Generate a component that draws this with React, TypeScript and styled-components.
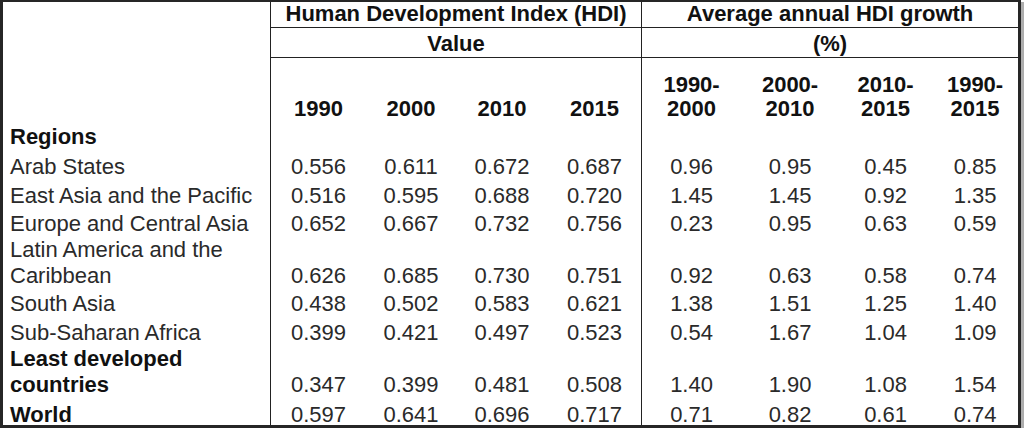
import React from 'react'
import styled, { createGlobalStyle } from 'styled-components'

const GlobalStyle = createGlobalStyle`
	body {
		margin: 0;
		background: #fff;
		font-family: "Liberation Sans", Arial, sans-serif;
	}
`

const Table = styled.table`
	box-sizing: border-box;
	width: 1021px;
	table-layout: fixed;
	border-collapse: separate;
	border-spacing: 0;
	border: 3px solid #262626;
	border-top-width: 2px;
	box-shadow: 3px 2px 0 #adadad;
	font-size: 22px;
	color: #2a2a2a;
`

const Row = styled.tr<{ $h: number }>`
	height: ${props => props.$h}px;
`

const Cell = styled.td<{ $divider?: boolean; $bold?: boolean; $tight?: boolean }>`
	box-sizing: border-box;
	padding: 0;
	vertical-align: bottom;
	text-align: center;
	line-height: ${props => props.$tight ? 20 : 26}px;
	white-space: nowrap;
	font-weight: ${props => props.$bold ? 'bold' : 'normal'};
	color: ${props => props.$bold ? '#111' : '#2a2a2a'};
	border-left: ${props => props.$divider ? '1px solid #222' : 'none'};
`

const Label = styled(Cell)`
	text-align: left;
	padding-left: 7px;
	white-space: normal;
`

const Head = styled.th<{ $divider?: boolean; $rule?: boolean; $middle?: boolean }>`
	box-sizing: border-box;
	padding: 0 0 ${props => props.$rule ? 1 : 0}px 0;
	vertical-align: ${props => props.$middle ? 'middle' : 'bottom'};
	text-align: center;
	line-height: 24px;
	font-weight: bold;
	color: #111;
	border-left: ${props => props.$divider ? '1px solid #222' : 'none'};
	border-bottom: ${props => props.$rule ? '1px solid #222' : 'none'};
`

const widths = [267, 96, 90, 92, 93, 100, 98, 93, 86]

const years = ['1990', '2000', '2010', '2015']
const periods = [['1990-', '2000'], ['2000-', '2010'], ['2010-', '2015'], ['1990-', '2015']]

type Region = { label: string; hdi: string[]; growth: string[]; h: number; bold?: boolean; tight?: boolean }

const regions: Region[] = [
	{ label: 'Arab States', hdi: ['0.556', '0.611', '0.672', '0.687'], growth: ['0.96', '0.95', '0.45', '0.85'], h: 30 },
	{ label: 'East Asia and the Pacific', hdi: ['0.516', '0.595', '0.688', '0.720'], growth: ['1.45', '1.45', '0.92', '1.35'], h: 29 },
	{ label: 'Europe and Central Asia', hdi: ['0.652', '0.667', '0.732', '0.756'], growth: ['0.23', '0.95', '0.63', '0.59'], h: 28 },
	{ label: 'Latin America and the Caribbean', hdi: ['0.626', '0.685', '0.730', '0.751'], growth: ['0.92', '0.63', '0.58', '0.74'], h: 52 },
	{ label: 'South Asia', hdi: ['0.438', '0.502', '0.583', '0.621'], growth: ['1.38', '1.51', '1.25', '1.40'], h: 28 },
	{ label: 'Sub-Saharan Africa', hdi: ['0.399', '0.421', '0.497', '0.523'], growth: ['0.54', '1.67', '1.04', '1.09'], h: 29 },
	{ label: 'Least developed countries', hdi: ['0.347', '0.399', '0.481', '0.508'], growth: ['1.40', '1.90', '1.08', '1.54'], h: 52, bold: true },
	{ label: 'World', hdi: ['0.597', '0.641', '0.696', '0.717'], growth: ['0.71', '0.82', '0.61', '0.74'], h: 27, bold: true, tight: true },
]

const App = () => {
	return (
		<>
			<GlobalStyle />
			<Table>
				<colgroup>
					{widths.map((w, i) => <col key={i} style={{ width: w }} />)}
				</colgroup>
				<thead>
					<Row $h={25}>
						<Head />
						<Head colSpan={4} $divider $rule $middle>Human Development Index (HDI)</Head>
						<Head colSpan={4} $divider $rule $middle>Average annual HDI growth</Head>
					</Row>
					<Row $h={30}>
						<Head />
						<Head colSpan={4} $divider $rule>Value</Head>
						<Head colSpan={4} $divider $rule>(%)</Head>
					</Row>
					<Row $h={63}>
						<Head />
						{years.map((y, i) => <Head key={y} $divider={i === 0}>{y}</Head>)}
						{periods.map((p, i) => (
							<Head key={i} $divider={i === 0}>{p[0]}<br />{p[1]}</Head>
						))}
					</Row>
				</thead>
				<tbody>
					<Row $h={29}>
						<Label $bold>Regions</Label>
						<Cell $divider />
						<Cell />
						<Cell />
						<Cell />
						<Cell $divider />
						<Cell />
						<Cell />
						<Cell />
					</Row>
					{regions.map(r => (
						<Row key={r.label} $h={r.h}>
							<Label $bold={r.bold} $tight={r.tight}>{r.label}</Label>
							{r.hdi.map((v, i) => <Cell key={'h' + i} $divider={i === 0} $tight={r.tight}>{v}</Cell>)}
							{r.growth.map((v, i) => <Cell key={'g' + i} $divider={i === 0} $tight={r.tight}>{v}</Cell>)}
						</Row>
					))}
				</tbody>
			</Table>
		</>
	)
}

export default App
